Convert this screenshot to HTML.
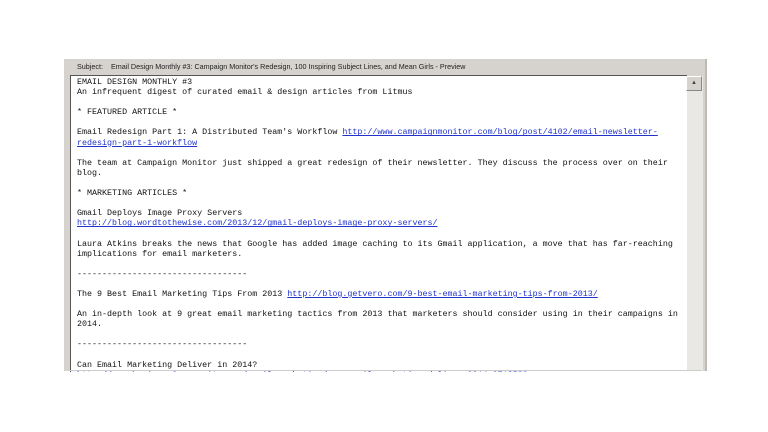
<!DOCTYPE html>
<html><head><style>
body{margin:0;width:768px;height:432px;background:#fff;position:relative;overflow:hidden;font-family:"Liberation Sans",sans-serif}
.panel{position:absolute;left:64px;top:59px;width:641px;height:312px;background:#d6d3ce;border-right:2px solid #bdbab5}
.subj{position:absolute;left:77px;top:62px;font-size:7.2px;color:#222;white-space:nowrap}
.box{position:absolute;left:70px;top:75px;width:616px;height:296px;background:#fff;border-left:1px solid #555;border-top:1px solid #555;overflow:hidden}
.txt{position:absolute;left:6px;top:1px;font-family:"Liberation Mono",monospace;font-size:8.35px;line-height:10.1px;color:#111;white-space:pre;margin:0}
a{color:#2233cc;text-decoration:underline}
.sb{position:absolute;left:686px;top:76px;width:16px;height:295px;background:#eae8e4;border-left:1px solid #fff}
.sbb{position:absolute;left:686px;top:76px;width:14px;height:13px;background:#d6d3ce;border:1px solid;border-color:#fff #888 #888 #fff;font-size:6px;text-align:center;line-height:12px;color:#444}
.bot{position:absolute;left:70px;top:370px;width:632px;height:1px;background:#ccc}
</style></head><body>
<div class="panel"></div>
<div class="subj">Subject:&nbsp;&nbsp;&nbsp; Email Design Monthly #3: Campaign Monitor's Redesign, 100 Inspiring Subject Lines, and Mean Girls - Preview</div>
<div class="box"><pre class="txt">EMAIL DESIGN MONTHLY #3
An infrequent digest of curated email &amp; design articles from Litmus

* FEATURED ARTICLE *

Email Redesign Part 1: A Distributed Team's Workflow <a>http://www.campaignmonitor.com/blog/post/4102/email-newsletter-</a>
<a>redesign-part-1-workflow</a>

The team at Campaign Monitor just shipped a great redesign of their newsletter. They discuss the process over on their
blog.

* MARKETING ARTICLES *

Gmail Deploys Image Proxy Servers
<a>http://blog.wordtothewise.com/2013/12/gmail-deploys-image-proxy-servers/</a>

Laura Atkins breaks the news that Google has added image caching to its Gmail application, a move that has far-reaching
implications for email marketers.

----------------------------------

The 9 Best Email Marketing Tips From 2013 <a>http://blog.getvero.com/9-best-email-marketing-tips-from-2013/</a>

An in-depth look at 9 great email marketing tactics from 2013 that marketers should consider using in their campaigns in
2014.

----------------------------------

Can Email Marketing Deliver in 2014?
<a>http://www.business2community.com/email-marketing/can-email-marketing-deliver-2014-0718583</a></pre></div>
<div class="sb"></div>
<div class="sbb">▲</div>
<div class="bot"></div>
</body></html>
